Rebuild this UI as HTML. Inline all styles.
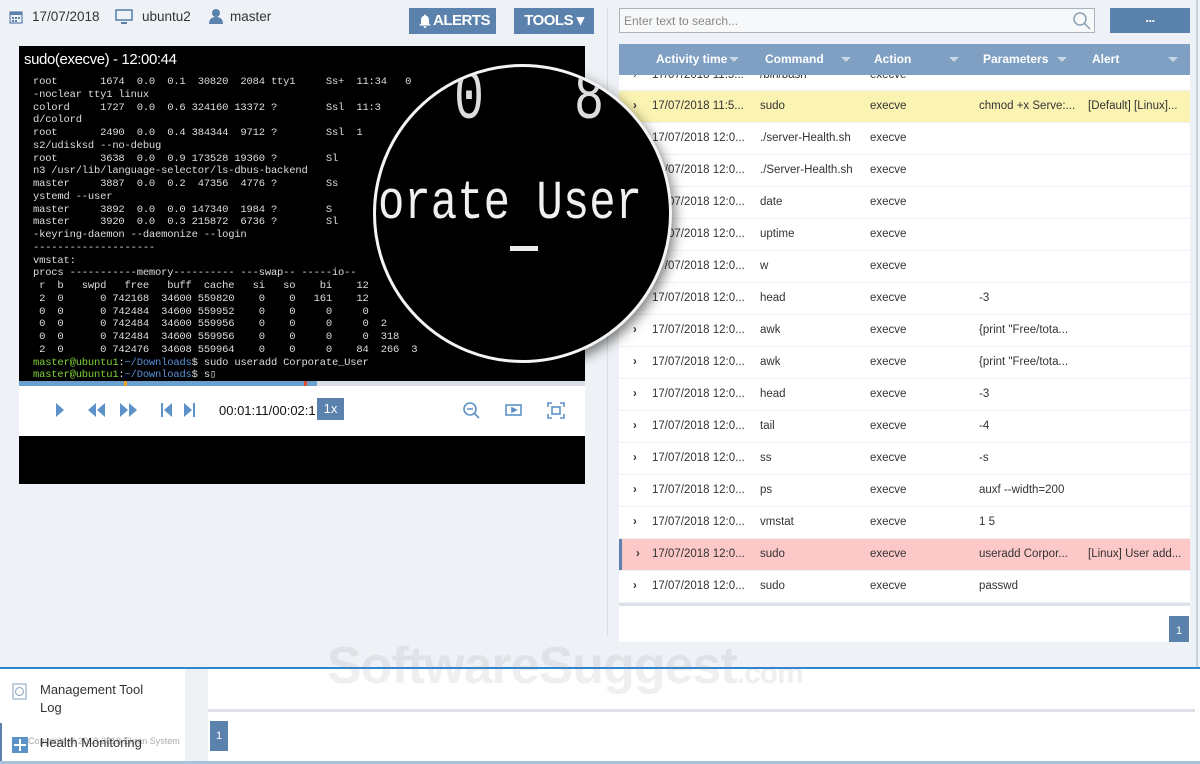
<!DOCTYPE html>
<html><head><meta charset="utf-8"><style>
*{box-sizing:border-box;margin:0;padding:0}
body{width:1200px;height:764px;overflow:hidden;background:#eef2f6;font-family:"Liberation Sans",sans-serif;position:relative;font-size:12px;color:#222}
.abs{position:absolute}
.btn{position:absolute;background:#5b82ad;color:#fff;font-weight:bold;font-size:15px;text-align:center;line-height:26px;letter-spacing:-0.5px}
.term{position:absolute;left:19px;top:46px;width:566px;height:438px;background:#000;overflow:hidden}
pre{font-family:"Liberation Mono",monospace;font-size:10.5px;line-height:12.75px;color:#ddd;position:absolute;left:14px;top:30px;letter-spacing:-0.2px}
.g{color:#7fd23a}.b{color:#5a8fd8}
.row{position:absolute;left:619px;width:571px;height:31px;background:#fff;line-height:31px;font-size:11.5px;color:#333}
.row span{position:absolute}
.hdr{position:absolute;left:619px;top:44px;width:571px;height:31px;background:#7f9fc3;color:#fff;font-weight:bold;font-size:12px;line-height:31px}
.hdr span{position:absolute}
.tri{position:absolute;top:13px;width:0;height:0;border-left:5px solid transparent;border-right:5px solid transparent;border-top:5px solid #c8d6e6}
</style></head><body>
<!-- top bar -->
<svg class="abs" style="left:9px;top:10px" width="14" height="14"><rect x="1" y="2" width="12" height="11" fill="none" stroke="#5b82ad" stroke-width="1.2"/><rect x="1" y="2" width="12" height="3" fill="#5b82ad"/><g fill="#5b82ad"><rect x="3" y="7" width="2" height="2"/><rect x="6" y="7" width="2" height="2"/><rect x="9" y="7" width="2" height="2"/><rect x="3" y="10" width="2" height="2"/><rect x="6" y="10" width="2" height="2"/></g></svg>
<div class="abs" style="left:32px;top:9px;font-size:13.5px;color:#333">17/07/2018</div>
<svg class="abs" style="left:115px;top:9px" width="20" height="16"><rect x="1" y="1" width="16" height="10" fill="none" stroke="#5b82ad" stroke-width="1.6"/><rect x="6" y="13" width="6" height="2" fill="#5b82ad"/></svg>
<div class="abs" style="left:142px;top:9px;font-size:13.5px;color:#333">ubuntu2</div>
<svg class="abs" style="left:209px;top:8px" width="14" height="16"><circle cx="7" cy="5" r="4" fill="#5b82ad"/><path d="M0 16 Q0 9 7 9 Q14 9 14 16Z" fill="#5b82ad"/></svg>
<div class="abs" style="left:230px;top:9px;font-size:13.5px;color:#333">master</div>
<div class="btn" style="left:409px;top:8px;width:87px;padding-left:18px">ALERTS</div>
<svg class="abs" style="left:419px;top:14px" width="12" height="14" fill="#fff"><path d="M6 0.5 C6.8 0.5 7 1.2 7 1.8 C9.5 2.4 10 4.5 10 7 L10 9.5 L12 11.5 L0 11.5 L2 9.5 L2 7 C2 4.5 2.5 2.4 5 1.8 C5 1.2 5.2 0.5 6 0.5Z M4.5 12.3 H7.5 Q7.3 14 6 14 Q4.7 14 4.5 12.3Z"/></svg>
<div class="btn" style="left:514px;top:8px;width:80px">TOOLS ▾</div>
<div class="abs" style="left:607px;top:8px;width:1px;height:628px;background:#d8dde3"></div>

<!-- terminal -->
<div class="term">
<div class="abs" style="left:5px;top:5px;color:#fff;font-size:15px;letter-spacing:-0.4px">sudo(execve) - 12:00:44</div>
<pre>root       1674  0.0  0.1  30820  2084 tty1     Ss+  11:34   0
-noclear tty1 linux
colord     1727  0.0  0.6 324160 13372 ?        Ssl  11:3
d/colord
root       2490  0.0  0.4 384344  9712 ?        Ssl  1
s2/udisksd --no-debug
root       3638  0.0  0.9 173528 19360 ?        Sl
n3 /usr/lib/language-selector/ls-dbus-backend
master     3887  0.0  0.2  47356  4776 ?        Ss
ystemd --user
master     3892  0.0  0.0 147340  1984 ?        S
master     3920  0.0  0.3 215872  6736 ?        Sl
-keyring-daemon --daemonize --login
--------------------
vmstat:
procs -----------memory---------- ---swap-- -----io--
 r  b   swpd   free   buff  cache   si   so    bi    12
 2  0      0 742168  34600 559820    0    0   161    12
 0  0      0 742484  34600 559952    0    0     0     0
 0  0      0 742484  34600 559956    0    0     0     0  2
 0  0      0 742484  34600 559956    0    0     0     0  318
 2  0      0 742476  34608 559964    0    0     0    84  266  3
<span class="g">master@ubuntu1</span>:<span class="b">~/Downloads</span>$ sudo useradd Corporate_User
<span class="g">master@ubuntu1</span>:<span class="b">~/Downloads</span>$ s▯</pre>
<div class="abs" style="left:0;top:335px;width:566px;height:5px;background:#d9dee6"></div>
<div class="abs" style="left:0;top:335px;width:298px;height:5px;background:#6a9fd0"></div>
<div class="abs" style="left:105px;top:335px;width:3px;height:5px;background:#f0a020"></div>
<div class="abs" style="left:285px;top:335px;width:3px;height:5px;background:#e05030"></div>
<div class="abs" style="left:0;top:340px;width:566px;height:50px;background:#fff"></div>
<svg class="abs" style="left:35px;top:355px" width="320" height="20" fill="#5b92c8">
<path d="M2 2 L10 9 L2 16Z"/>
<path d="M42 2 L34 9 L42 16Z M51 2 L43 9 L51 16Z"/>
<path d="M66 2 L74 9 L66 16Z M75 2 L83 9 L75 16Z"/>
<rect x="107" y="2" width="2" height="14"/><path d="M118 2 L110 9 L118 16Z"/>
<path d="M130 2 L138 9 L130 16Z"/><rect x="139" y="2" width="2" height="14"/>
</svg>
<div class="abs" style="left:200px;top:357px;font-size:13px;color:#111">00:01:11/00:02:1</div>
<div class="abs" style="left:298px;top:352px;width:27px;height:22px;background:#5b82ad;color:#fff;font-size:13px;line-height:22px;text-align:center">1x</div>
<svg class="abs" style="left:443px;top:356px" width="120" height="18" fill="none" stroke="#5b92c8" stroke-width="1.6">
<circle cx="8" cy="7" r="6"/><path d="M12 11 L17 16 M5 7 H11"/>
<rect x="44" y="3" width="15" height="10"/><path d="M50 6 L54 8 L50 10Z" fill="#5b92c8"/>
<path d="M86 5 V1 H90 M98 1 H102 V5 M102 12 V16 H98 M90 16 H86 V12"/><rect x="90" y="5" width="8" height="7"/>
</svg>
</div>

<!-- search -->
<div class="abs" style="left:619px;top:8px;width:476px;height:25px;background:#f6f8fa;border:1px solid #a9b3bd"></div>
<div class="abs" style="left:624px;top:14px;font-size:12px;color:#888">Enter text to search...</div>
<svg class="abs" style="left:1072px;top:11px" width="20" height="20" fill="none" stroke="#8aa0b8" stroke-width="1.5"><circle cx="8" cy="8" r="6"/><path d="M12.5 12.5 L18 18"/></svg>
<div class="btn" style="left:1110px;top:8px;width:80px;height:25px;line-height:20px;font-size:13px">...</div>

<!-- table -->
<div class="hdr"><span style="left:37px">Activity time</span><div class="tri" style="left:110px"></div><span style="left:146px">Command</span><div class="tri" style="left:222px"></div><span style="left:255px">Action</span><div class="tri" style="left:330px"></div><span style="left:364px">Parameters</span><div class="tri" style="left:438px"></div><span style="left:473px">Alert</span><div class="tri" style="left:549px"></div></div>
<div class="row" style="top:75px;height:15px;line-height:1px;overflow:hidden"><span style="left:14px">›</span><span style="left:33px">17/07/2018 11:5...</span><span style="left:141px">/bin/bash</span><span style="left:251px">execve</span></div>

<div class="row" style="top:91px;background:#fbf3b2"><span style="left:14px;font-weight:bold">›</span><span style="left:33px">17/07/2018 11:5...</span><span style="left:141px">sudo</span><span style="left:251px">execve</span><span style="left:360px">chmod +x Serve:...</span><span style="left:469px">[Default] [Linux]...</span></div>
<div class="row" style="top:123px"><span style="left:14px;font-weight:bold">›</span><span style="left:33px">17/07/2018 12:0...</span><span style="left:141px">./server-Health.sh</span><span style="left:251px">execve</span></div>
<div class="row" style="top:155px"><span style="left:14px;font-weight:bold">›</span><span style="left:33px">17/07/2018 12:0...</span><span style="left:141px">./Server-Health.sh</span><span style="left:251px">execve</span></div>
<div class="row" style="top:187px"><span style="left:14px;font-weight:bold">›</span><span style="left:33px">17/07/2018 12:0...</span><span style="left:141px">date</span><span style="left:251px">execve</span></div>
<div class="row" style="top:219px"><span style="left:14px;font-weight:bold">›</span><span style="left:33px">17/07/2018 12:0...</span><span style="left:141px">uptime</span><span style="left:251px">execve</span></div>
<div class="row" style="top:251px"><span style="left:14px;font-weight:bold">›</span><span style="left:33px">17/07/2018 12:0...</span><span style="left:141px">w</span><span style="left:251px">execve</span></div>
<div class="row" style="top:283px"><span style="left:14px;font-weight:bold">›</span><span style="left:33px">17/07/2018 12:0...</span><span style="left:141px">head</span><span style="left:251px">execve</span><span style="left:360px">-3</span></div>
<div class="row" style="top:315px"><span style="left:14px;font-weight:bold">›</span><span style="left:33px">17/07/2018 12:0...</span><span style="left:141px">awk</span><span style="left:251px">execve</span><span style="left:360px">{print "Free/tota...</span></div>
<div class="row" style="top:347px"><span style="left:14px;font-weight:bold">›</span><span style="left:33px">17/07/2018 12:0...</span><span style="left:141px">awk</span><span style="left:251px">execve</span><span style="left:360px">{print "Free/tota...</span></div>
<div class="row" style="top:379px"><span style="left:14px;font-weight:bold">›</span><span style="left:33px">17/07/2018 12:0...</span><span style="left:141px">head</span><span style="left:251px">execve</span><span style="left:360px">-3</span></div>
<div class="row" style="top:411px"><span style="left:14px;font-weight:bold">›</span><span style="left:33px">17/07/2018 12:0...</span><span style="left:141px">tail</span><span style="left:251px">execve</span><span style="left:360px">-4</span></div>
<div class="row" style="top:443px"><span style="left:14px;font-weight:bold">›</span><span style="left:33px">17/07/2018 12:0...</span><span style="left:141px">ss</span><span style="left:251px">execve</span><span style="left:360px">-s</span></div>
<div class="row" style="top:475px"><span style="left:14px;font-weight:bold">›</span><span style="left:33px">17/07/2018 12:0...</span><span style="left:141px">ps</span><span style="left:251px">execve</span><span style="left:360px">auxf --width=200</span></div>
<div class="row" style="top:507px"><span style="left:14px;font-weight:bold">›</span><span style="left:33px">17/07/2018 12:0...</span><span style="left:141px">vmstat</span><span style="left:251px">execve</span><span style="left:360px">1 5</span></div>
<div class="row" style="top:539px;background:#fcc8c8;border-left:3px solid #5b82ad"><span style="left:14px;font-weight:bold">›</span><span style="left:30px">17/07/2018 12:0...</span><span style="left:138px">sudo</span><span style="left:248px">execve</span><span style="left:357px">useradd Corpor...</span><span style="left:466px">[Linux] User add...</span></div>
<div class="row" style="top:571px"><span style="left:14px;font-weight:bold">›</span><span style="left:33px">17/07/2018 12:0...</span><span style="left:141px">sudo</span><span style="left:251px">execve</span><span style="left:360px">passwd</span></div>
<div class="abs" style="left:619px;top:603px;width:571px;height:3px;background:#dde1e6"></div>
<div class="abs" style="left:619px;top:606px;width:571px;height:36px;background:#fff"></div>
<div class="abs" style="left:1169px;top:616px;width:20px;height:26px;background:#5b82ad;color:#fff;font-size:11px;line-height:30px;text-align:center">1</div>
<div class="abs" style="left:1196px;top:0;width:2px;height:668px;background:#c9d3dd"></div>

<!-- magnifier (on top) -->
<div class="abs" style="left:373px;top:64px;width:299px;height:299px;border-radius:50%;background:#000;border:3px solid #f4f4f4;box-shadow:3px 5px 12px rgba(0,0,0,0.5);overflow:hidden;z-index:5">
<div class="abs" style="left:78px;top:-8px;font-family:'Liberation Mono',monospace;font-size:50px;line-height:60px;color:#ddd;white-space:pre;transform:scaleY(1.4);transform-origin:top left">0   8</div>
<div class="abs" style="left:2px;top:106px;font-family:'Liberation Mono',monospace;font-size:44px;line-height:50px;color:#f0f0f0;white-space:pre;transform:scaleY(1.25);transform-origin:top left">orate User</div>
<div class="abs" style="left:134px;top:179px;width:28px;height:5px;background:#eee"></div>
</div>

<!-- bottom -->
<div class="abs" style="left:0;top:667px;width:1200px;height:2px;background:#2f86d0"></div>
<div class="abs" style="left:0;top:669px;width:1200px;height:95px;background:#fff"></div>
<div class="abs" style="left:185px;top:669px;width:23px;height:95px;background:#eef1f4"></div>
<div class="abs" style="left:208px;top:709px;width:987px;height:3px;background:#dde1e6"></div>
<div class="abs" style="left:0;top:723px;width:2px;height:38px;background:#5b82ad"></div>
<div class="abs" style="left:0;top:761px;width:1200px;height:3px;background:#a8c4dc"></div>
<svg class="abs" style="left:12px;top:683px" width="16" height="18" fill="none" stroke="#9ab0c6" stroke-width="1.2"><rect x="1" y="1" width="13" height="15"/><circle cx="7.5" cy="8.5" r="4"/></svg>
<div class="abs" style="left:40px;top:681px;font-size:13px;color:#333;line-height:18px">Management Tool<br>Log</div>
<svg class="abs" style="left:12px;top:737px" width="16" height="16"><rect width="16" height="16" fill="#5b92c8"/><path d="M8 2 V14 M2 8 H14" stroke="#fff" stroke-width="2"/></svg>
<div class="abs" style="left:28px;top:736px;font-size:9px;color:#aaa">Copyright © 2013-2018 Ekran System</div>
<div class="abs" style="left:40px;top:735px;font-size:13px;color:#333">Health Monitoring</div>
<div class="abs" style="left:210px;top:721px;width:18px;height:30px;background:#5b82ad;color:#fff;font-size:11px;line-height:30px;text-align:center">1</div>

<div class="abs" style="left:327px;top:636px;font-size:52px;font-weight:bold;color:rgba(120,130,140,0.13);letter-spacing:-1px;white-space:nowrap;z-index:6">SoftwareSuggest<span style="font-size:30px">.com</span></div>
</body></html>
